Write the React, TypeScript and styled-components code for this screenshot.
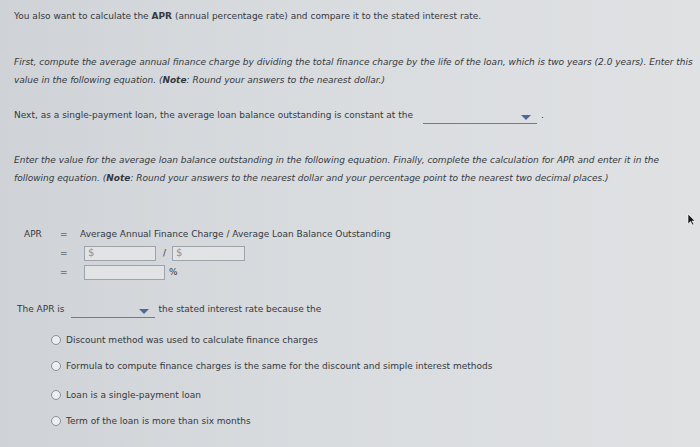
import React from "react";
import styled, { createGlobalStyle } from "styled-components";

const Global = createGlobalStyle`
  html, body { margin: 0; padding: 0; }
  body {
    width: 700px;
    height: 447px;
    overflow: hidden;
    background: linear-gradient(90deg, #cfd3d7 0%, #d9dcdf 45%, #dfe1e3 100%);
    font-family: "DejaVu Sans", Verdana, sans-serif;
    color: #35383e;
  }
`;

const Page = styled.div`
  position: relative;
  height: 447px;
  padding: 7px 0 0 14px;
  box-sizing: border-box;
  font-size: 9px;
`;

const Para = styled.p<{ $mt: number; $italic?: boolean }>`
  margin: ${(p) => p.$mt}px 0 0 0;
  line-height: 18px;
  font-style: ${(p) => (p.$italic ? "italic" : "normal")};
  white-space: nowrap;
`;

const Line = styled.span`
  display: block;
`;

const Select = styled.span<{ $w: number; $ml: number }>`
  display: inline-flex;
  justify-content: flex-end;
  align-items: center;
  width: ${(p) => p.$w}px;
  height: 11px;
  border-bottom: 1px solid #6f7d92;
  vertical-align: -2px;
  margin: 0 4px 0 ${(p) => p.$ml}px;
  box-sizing: border-box;
  padding-right: 6px;
`;

const Arrow = styled.span`
  width: 0;
  height: 0;
  border-left: 5px solid transparent;
  border-right: 5px solid transparent;
  border-top: 5px solid #4a6a99;
`;

const Equation = styled.div`
  display: grid;
  grid-template-columns: 36px 20px auto;
  grid-auto-rows: auto;
  row-gap: 1px;
  margin: 38px 0 0 10px;
  align-items: center;
`;

const Cell = styled.div`
  line-height: 18px;
  white-space: nowrap;
  display: flex;
  align-items: center;
`;

const Eq = styled.span`
  color: #777c84;
  font-weight: bold;
`;

const Input = styled.span<{ $w: number }>`
  display: inline-flex;
  align-items: center;
  width: ${(p) => p.$w}px;
  height: 15px;
  box-sizing: border-box;
  border: 1px solid #9da3aa;
  background: #e1e3e5;
  color: #8f959d;
  padding-left: 3px;
  font-size: 10px;
`;

const Slash = styled.span`
  margin: 0 6px 0 7px;
`;

const Percent = styled.span`
  margin-left: 4px;
`;

const StartInput = styled.span`
  margin-left: 4px;
  display: inline-flex;
  align-items: center;
`;

const AprRow = styled.div`
  margin: 19px 0 0 3px;
  line-height: 18px;
  white-space: nowrap;
`;

const Options = styled.div`
  margin: 13px 0 0 37px;
  display: flex;
  flex-direction: column;
  gap: 8px;
`;

const Option = styled.label<{ $mt?: number }>`
  display: flex;
  align-items: center;
  line-height: 18px;
  margin-top: ${(p) => p.$mt ?? 0}px;
  white-space: nowrap;
`;

const Radio = styled.span`
  width: 8px;
  height: 8px;
  border-radius: 50%;
  border: 1px solid #8a9098;
  background: #eceeef;
  margin-right: 5px;
  box-sizing: content-box;
`;

const Cursor = styled.svg`
  position: absolute;
  left: 687px;
  top: 213px;
`;

export default function App() {
  return (
    <>
      <Global />
      <Page>
        <Para $mt={0}>
          You also want to calculate the <b>APR</b> (annual percentage rate) and compare it to the stated interest rate.
        </Para>
        <Para $mt={28} $italic>
          <Line>
            First, compute the average annual finance charge by dividing the total finance charge by the life of the loan, which is two years (2.0 years). Enter this
          </Line>
          <Line>
            value in the following equation. (<b>Note</b>: Round your answers to the nearest dollar.)
          </Line>
        </Para>
        <Para $mt={17}>
          Next, as a single-payment loan, the average loan balance outstanding is constant at the
          <Select $w={114} $ml={10}>
            <Arrow />
          </Select>
          .
        </Para>
        <Para $mt={27} $italic>
          <Line>
            Enter the value for the average loan balance outstanding in the following equation. Finally, complete the calculation for APR and enter it in the
          </Line>
          <Line>
            following equation. (<b>Note</b>: Round your answers to the nearest dollar and your percentage point to the nearest two decimal places.)
          </Line>
        </Para>
        <Equation>
          <Cell>APR</Cell>
          <Cell>
            <Eq>=</Eq>
          </Cell>
          <Cell>Average Annual Finance Charge / Average Loan Balance Outstanding</Cell>
          <Cell />
          <Cell>
            <Eq>=</Eq>
          </Cell>
          <Cell>
            <StartInput>
              <Input $w={72}>$</Input>
              <Slash>/</Slash>
              <Input $w={73}>$</Input>
            </StartInput>
          </Cell>
          <Cell />
          <Cell>
            <Eq>=</Eq>
          </Cell>
          <Cell>
            <StartInput>
              <Input $w={81} />
              <Percent>%</Percent>
            </StartInput>
          </Cell>
        </Equation>
        <AprRow>
          The APR is
          <Select $w={84} $ml={6}>
            <Arrow />
          </Select>
          the stated interest rate because the
        </AprRow>
        <Options>
          <Option>
            <Radio />
            Discount method was used to calculate finance charges
          </Option>
          <Option>
            <Radio />
            Formula to compute finance charges is the same for the discount and simple interest methods
          </Option>
          <Option $mt={3}>
            <Radio />
            Loan is a single-payment loan
          </Option>
          <Option>
            <Radio />
            Term of the loan is more than six months
          </Option>
        </Options>
        <Cursor width="9" height="13" viewBox="0 0 9 13">
          <path d="M1 1 L1 11 L3.5 8.5 L5.5 12 L7 11.3 L5 8 L8 8 Z" fill="#1a1a1a" stroke="#fff" strokeWidth="0.6" />
        </Cursor>
      </Page>
    </>
  );
}
